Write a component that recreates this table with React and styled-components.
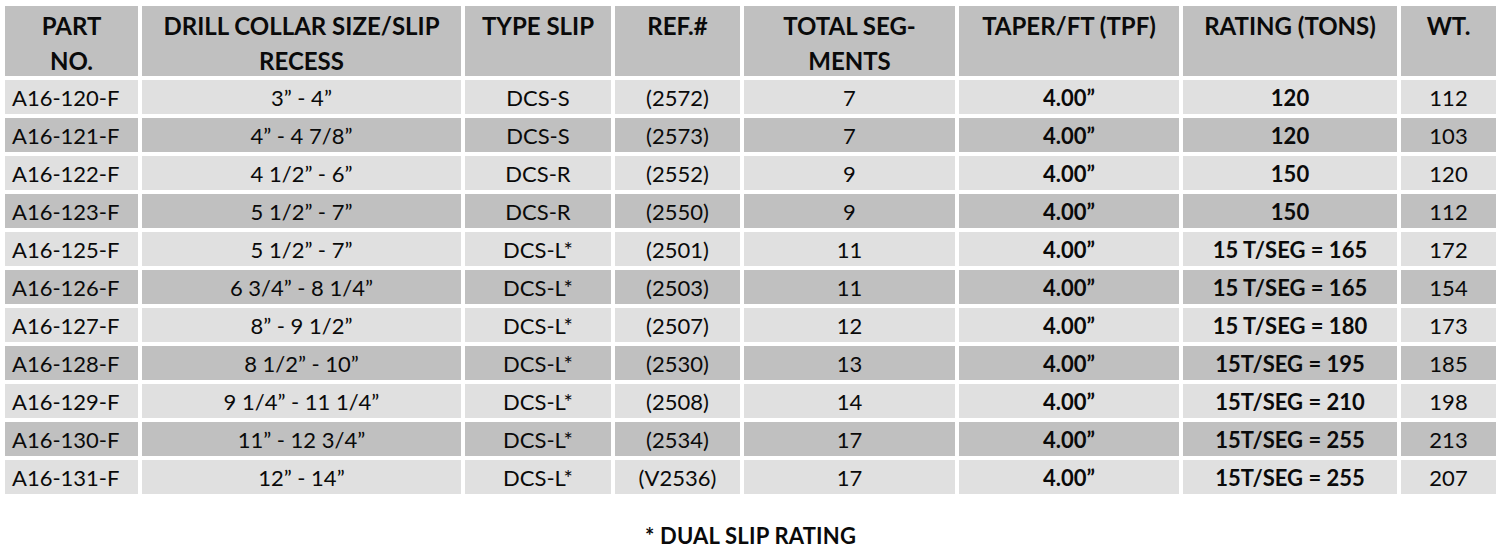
import React from 'react';
import styled, { createGlobalStyle } from 'styled-components';

const GlobalStyle = createGlobalStyle`
    body {
        margin: 0;
        background: #fff;
        font-family: 'Lato', 'Open Sans', sans-serif;
        color: #0a0a0a;
    }
`;

const Page = styled.div`
    padding: 6px 8px 0 5px;
    width: 1504px;
    box-sizing: border-box;
`;

const Sheet = styled.div`
    display: grid;
    grid-template-columns: 133px 319px 146px 125px 211px 220px 214px 95px;
    grid-auto-rows: 34px;
    grid-template-rows: 70px;
    gap: 4px;
`;

const HeadCell = styled.div`
    background: #c0c0c0;
    font-weight: 700;
    font-size: 24px;
    line-height: 35px;
    text-align: center;
    padding-top: 2px;
    box-sizing: border-box;
    white-space: nowrap;
`;

const Cell = styled.div`
    background: ${props => (props.$dark ? '#c0c0c0' : '#e0e0e0')};
    font-size: 22px;
    font-weight: ${props => (props.$bold ? 700 : 400)};
    display: flex;
    align-items: center;
    justify-content: ${props => (props.$left ? 'flex-start' : 'center')};
    padding-left: ${props => (props.$left ? '7px' : '0')};
    box-sizing: border-box;
    white-space: nowrap;
`;

const Note = styled.div`
    margin-top: 28px;
    text-align: center;
    font-weight: 700;
    font-size: 22px;
    letter-spacing: 0.2px;
`;

const headers = [
    ['PART', 'NO.'],
    ['DRILL COLLAR SIZE/SLIP', 'RECESS'],
    ['TYPE SLIP'],
    ['REF.#'],
    ['TOTAL SEG-', 'MENTS'],
    ['TAPER/FT (TPF)'],
    ['RATING (TONS)'],
    ['WT.'],
];

const rows = [
    ['A16-120-F', '3\u201d - 4\u201d', 'DCS-S', '(2572)', '7', '4.00\u201d', '120', '112'],
    ['A16-121-F', '4\u201d - 4 7/8\u201d', 'DCS-S', '(2573)', '7', '4.00\u201d', '120', '103'],
    ['A16-122-F', '4 1/2\u201d - 6\u201d', 'DCS-R', '(2552)', '9', '4.00\u201d', '150', '120'],
    ['A16-123-F', '5 1/2\u201d - 7\u201d', 'DCS-R', '(2550)', '9', '4.00\u201d', '150', '112'],
    ['A16-125-F', '5 1/2\u201d - 7\u201d', 'DCS-L*', '(2501)', '11', '4.00\u201d', '15 T/SEG = 165', '172'],
    ['A16-126-F', '6 3/4\u201d - 8 1/4\u201d', 'DCS-L*', '(2503)', '11', '4.00\u201d', '15 T/SEG = 165', '154'],
    ['A16-127-F', '8\u201d - 9 1/2\u201d', 'DCS-L*', '(2507)', '12', '4.00\u201d', '15 T/SEG = 180', '173'],
    ['A16-128-F', '8 1/2\u201d - 10\u201d', 'DCS-L*', '(2530)', '13', '4.00\u201d', '15T/SEG = 195', '185'],
    ['A16-129-F', '9 1/4\u201d - 11 1/4\u201d', 'DCS-L*', '(2508)', '14', '4.00\u201d', '15T/SEG = 210', '198'],
    ['A16-130-F', '11\u201d - 12 3/4\u201d', 'DCS-L*', '(2534)', '17', '4.00\u201d', '15T/SEG = 255', '213'],
    ['A16-131-F', '12\u201d - 14\u201d', 'DCS-L*', '(V2536)', '17', '4.00\u201d', '15T/SEG = 255', '207'],
];

// taper + rating columns are bold
const boldCols = [5, 6];

function App() {
    return (
        <>
            <GlobalStyle />
            <Page>
                <Sheet>
                    {headers.map((lines, i) => (
                        <HeadCell key={'h' + i}>
                            {lines.map((l, j) => (
                                <div key={j}>{l}</div>
                            ))}
                        </HeadCell>
                    ))}
                    {rows.map((row, r) =>
                        row.map((val, c) => (
                            <Cell
                                key={r + '-' + c}
                                $dark={r % 2 === 1}
                                $left={c === 0}
                                $bold={boldCols.includes(c)}
                            >
                                {val}
                            </Cell>
                        ))
                    )}
                </Sheet>
                <Note>* DUAL SLIP RATING</Note>
            </Page>
        </>
    );
}

export default App;
